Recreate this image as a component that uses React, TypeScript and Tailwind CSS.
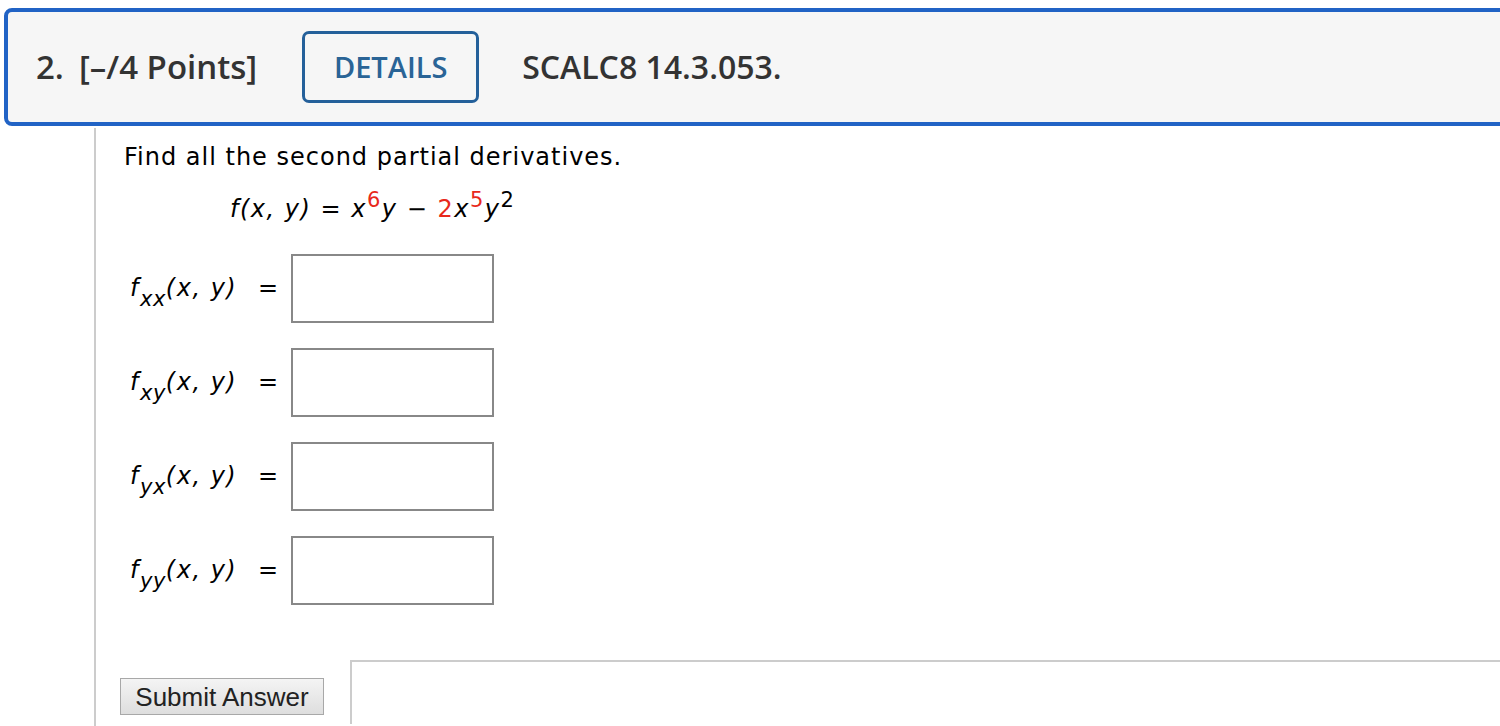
import React from 'react';

const rows = [
  { sub: 'xx' },
  { sub: 'xy' },
  { sub: 'yx' },
  { sub: 'yy' },
];

function Label({ sub }: { sub: string }) {
  return (
    <span className="whitespace-nowrap italic tracking-[1.5px]">
      f<sub className="text-[21px] align-[-5px] tracking-[0.5px]">{sub}</sub>(x, y)
    </span>
  );
}

export default function App() {
  return (
    <div className="w-[1500px] h-[726px] overflow-hidden bg-white text-black">
      {/* question header */}
      <div className="ml-[4px] mt-[8px] w-[1510px] h-[118px] border-4 border-[#2163c5] rounded-l-[8px] bg-[#f6f6f6] flex items-center pl-[28px] font-['Open_Sans',sans-serif] font-semibold text-[#333]">
        <span className="text-[33px]">2.</span>
        <span className="text-[33px] ml-[15px]">[–/4 Points]</span>
        <button className="ml-[45px] w-[177px] h-[72px] border-[3px] border-[#24609a] rounded-[7px] text-[#2a6496] text-[29px] font-semibold">
          DETAILS
        </button>
        <span className="ml-[43px] text-[32px]">SCALC8 14.3.053.</span>
      </div>

      {/* question body */}
      <div className="ml-[94px] mt-[2px] border-l-2 border-[#cccccc] h-[600px] pl-[28px] font-['DejaVu_Sans',Verdana,sans-serif] text-[24px] tracking-[1px] text-black">
        <p className="pt-[14px] leading-[30px]">Find all the second partial derivatives.</p>
        <p className="mt-[22px] ml-[106px] leading-[30px] italic tracking-[1.5px]">
          f(x, y) = x<sup className="not-italic text-[#e8291c] text-[21px]">6</sup>y −{' '}
          <span className="not-italic text-[#e8291c]">2</span>x
          <sup className="not-italic text-[#e8291c] text-[21px]">5</sup>y
          <sup className="not-italic text-[21px]">2</sup>
        </p>

        <div className="mt-[30px] flex flex-col gap-[26px]">
          {rows.map((r) => (
            <div key={r.sub} className="flex items-center h-[68px]">
              <div className="w-[122px] ml-[6px]">
                <Label sub={r.sub} />
              </div>
              <span className="ml-[6px] w-[23px]">=</span>
              <input className="ml-[10px] w-[203px] h-[69px] border-2 border-[#888888] bg-white outline-none" />
            </div>
          ))}
        </div>

        <div className="mt-[56px] flex items-end">
          <button className="mb-[9px] ml-[-4px] w-[204px] h-[37px] border border-[#a8a8a8] bg-gradient-to-b from-[#f4f4f4] to-[#dedede] font-['Liberation_Sans',Arial,sans-serif] text-[26px] tracking-normal text-[#222] leading-none">
            Submit Answer
          </button>
          <div className="ml-[26px] flex-1 h-[64px] border-l-2 border-t-2 border-[#cccccc] mr-[-20px]" />
        </div>
      </div>
    </div>
  );
}
